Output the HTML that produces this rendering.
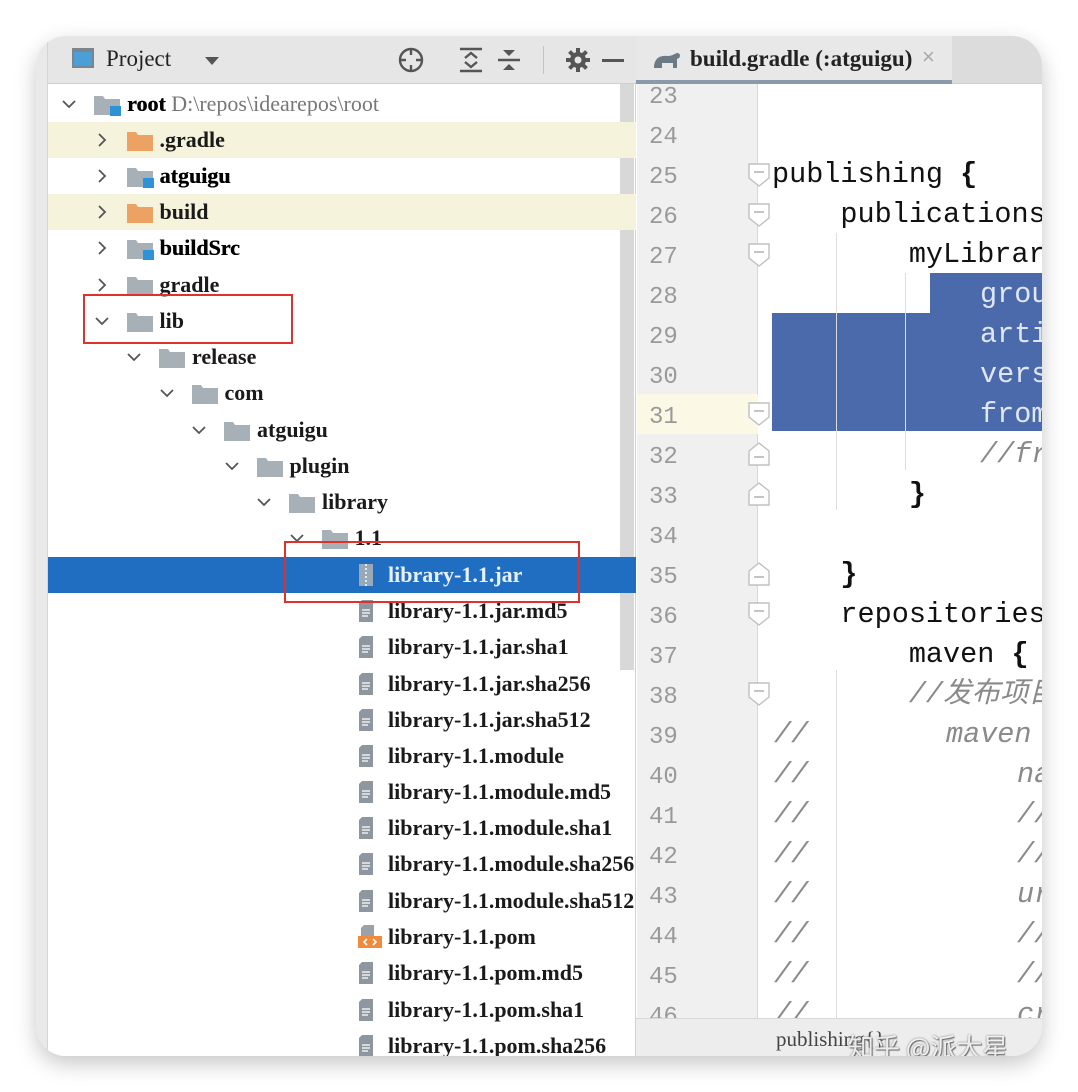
<!DOCTYPE html>
<html><head><meta charset="utf-8"><style>
*{margin:0;padding:0;box-sizing:border-box}
body{width:1078px;height:1092px;background:#fff;position:relative;overflow:hidden;font-family:"Liberation Serif","Noto Serif CJK SC",serif}
#frame{position:absolute;left:36px;top:36px;width:1006px;height:1020px;border-radius:30px;overflow:hidden;background:#fff;box-shadow:0 8px 22px rgba(0,0,0,.22)}
.abs{position:absolute}
#strip{left:0;top:0;width:12px;height:1020px;background:#e9e9e9;border-right:1px solid #d4d4d4}
#lhead{left:12px;top:0;width:588px;height:48px;background:#e6e6e6;border-bottom:1px solid #d0d0d0}
#tree{left:12px;top:48px;width:588px;height:972px;background:#fff;border-right:1px solid #d0d0d0}
.row{position:absolute;left:0;width:588px;height:36px;font-size:22px;line-height:36px;color:#1a1a1a;font-weight:bold;white-space:nowrap}
.row span{position:absolute;top:0}
.arr{position:absolute;top:9px;width:18px;height:18px}
.fold{position:absolute;top:8px}
.mod{color:#000;text-shadow:0.4px 0 0 #000}
.gray{color:#777;font-weight:normal}
#ehead{left:600px;top:0;width:406px;height:48px;background:#dcdcdc;border-bottom:1px solid #cfcfcf}
#tab{left:600px;top:0;width:316px;height:48px;background:#e8e8e8;border-bottom:4px solid #8a9aaa}
#gutter{left:601px;top:48px;width:121px;height:934px;background:#f0f0f0;border-right:1px solid #d6d6d6}
#code{left:722px;top:48px;width:284px;height:934px;background:#fff;overflow:hidden}
#folds{left:709px;top:48px;width:28px;height:934px}
#bbar{left:600px;top:982px;width:406px;height:38px;background:#ededed;border-top:1px solid #d8d8d8}
.ln{position:absolute;left:12px;font-family:"Liberation Mono",monospace;font-size:24px;color:#9a9a9a;line-height:40px;height:40px}
.cl{position:absolute;left:0;font-family:"Liberation Mono","Noto Sans CJK SC",monospace;font-size:28.5px;color:#111;line-height:40px;height:40px;white-space:pre}
.cm{color:#8a8a8a;font-style:italic}
.red{position:absolute;border:2px solid #e0322d}
</style></head><body>
<div id="frame">
<div class="abs" id="strip"></div>
<div class="abs" id="lhead">
 <div class="abs" style="left:24px;top:12px;width:22px;height:20px;border:2px solid #7a8590;background:#4a9fd6;border-top-width:4px"></div>
 <div class="abs" style="left:58px;top:10px;font-family:'Liberation Serif',serif;font-size:23px;color:#222">Project</div>
 <svg class="abs" style="left:156px;top:20px" width="16" height="10"><path d="M1 1 L15 1 L8 9 Z" fill="#555"/></svg>
 <svg class="abs" style="left:348px;top:10px" width="120" height="28">
  <circle cx="15" cy="14" r="11" fill="none" stroke="#555" stroke-width="2.4"/>
  <path d="M15 3v6M15 19v6M4 14h6M20 14h6" stroke="#555" stroke-width="2.4"/>
  <path d="M64 3h22M64 25h22M69 12l6-5 6 5M69 16l6 5 6-5" stroke="#555" stroke-width="2.4" fill="none"/>
 </svg>
 <svg class="abs" style="left:448px;top:10px" width="30" height="28"><path d="M2 14h22" stroke="#555" stroke-width="2.4"/><path d="M7 4l6 6 6-6Z M7 24l6-6 6 6Z" fill="#555"/></svg>
 <div class="abs" style="left:495px;top:10px;width:1px;height:28px;background:#c4c4c4"></div>
 <svg class="abs" style="left:518px;top:12px" width="24" height="24"><g fill="#555"><circle cx="12" cy="12" r="8"/><rect x="10" y="0" width="4" height="24"/><rect x="0" y="10" width="24" height="4"/><rect x="10" y="0" width="4" height="24" transform="rotate(45 12 12)"/><rect x="10" y="0" width="4" height="24" transform="rotate(-45 12 12)"/></g><circle cx="12" cy="12" r="3.5" fill="#e6e6e6"/></svg>
 <div class="abs" style="left:554px;top:23px;width:22px;height:3px;background:#555"></div>
</div>
<div class="abs" id="tree">
 <div class="abs" style="left:572px;top:0;width:14px;height:586px;background:#d8d8d8"></div>
 <div id="rows"></div>
</div>
<div class="abs" id="ehead"></div>
<div class="abs" id="tab">
 <svg class="abs" style="left:16px;top:14px" width="30" height="20"><path d="M2 18 C2 8 8 5 16 6 C20 6 22 4 25 3 C28 3 29 6 27 8 L25 9 L25 18 L21 18 L21 13 L10 13 L10 18 Z" fill="#6c7a86"/></svg>
 <div class="abs" style="left:54px;top:10px;font-size:23px;font-weight:bold;color:#222">build.gradle (:atguigu)</div>
 <div class="abs" style="left:286px;top:8px;font-family:'Liberation Sans',sans-serif;font-size:22px;color:#aaa">×</div>
</div>
<div class="abs" id="gutter"></div>
<div class="abs" id="code"></div>
<div class="abs" id="folds"></div>
<div class="abs" id="bbar"><div class="abs" style="left:140px;top:8px;font-size:21px;color:#444">publishing{}</div></div>
<div class="red" style="left:47px;top:258px;width:210px;height:50px"></div>
<div class="red" style="left:248px;top:505px;width:296px;height:62px"></div>
<div class="abs" style="left:812px;top:992px;font-family:'Noto Sans CJK SC',sans-serif;font-size:26px;color:rgba(255,255,255,.85);text-shadow:0 0 2px #777,1px 1px 1px #666">知乎 @派大星</div>
</div>
<script>
const F=(c,m)=>`<svg class="fold" width="28" height="22" style="left:LEFTpx"><path d="M1 2h9l2 3h15v16H1Z" fill="${c}"/>${m?'<rect x="17" y="12" width="11" height="10" fill="#2c93d6"/>':''}</svg>`;
const D=`<svg class="fold" width="16" height="24" style="left:LEFTpx;top:6px"><path d="M4 1h11v22H1V4Z" fill="#8e979f"/><path d="M4 11h8M4 14h8M4 17h6" stroke="#eee" stroke-width="1.5"/></svg>`;
const J=`<svg class="fold" width="16" height="24" style="left:LEFTpx;top:6px"><rect x="1" y="1" width="14" height="22" fill="#9aa9b8"/><path d="M8 1v22" stroke="#dfe8f0" stroke-width="2" stroke-dasharray="2 2"/></svg>`;
const P=`<svg class="fold" width="26" height="26" style="left:LEFTpx;top:5px"><path d="M6 1h10v14H3V4Z" fill="#9aa1a8"/><rect x="0" y="12" width="24" height="12" fill="#f08a3c"/><path d="M9 15l-3 3 3 3M15 15l3 3-3 3" stroke="#fff" stroke-width="1.6" fill="none"/></svg>`;
const G='#a7afb7',O='#eba263';
const R=[
[104,0,'d',F(G,1),'<b class="mod">root</b> <span class="gray" style="position:static">D:\\repos\\idearepos\\root</span>',0],
[140,1,'r',F(O),'.gradle',1],[176,1,'r',F(G,1),'<span class="mod" style="position:static">atguigu</span>',0],[212,1,'r',F(O),'build',1],
[248,1,'r',F(G,1),'<span class="mod" style="position:static">buildSrc</span>',0],[285,1,'r',F(G),'gradle',0],[321,1,'d',F(G),'lib',0],
[357,2,'d',F(G),'release'],[393,3,'d',F(G),'com'],[430,4,'d',F(G),'atguigu'],[466,5,'d',F(G),'plugin'],[502,6,'d',F(G),'library'],[538,7,'d',F(G),'1.1'],
[575,8,'',J,'library-1.1.jar',2],[611,8,'',D,'library-1.1.jar.md5'],[647,8,'',D,'library-1.1.jar.sha1'],[684,8,'',D,'library-1.1.jar.sha256'],
[720,8,'',D,'library-1.1.jar.sha512'],[756,8,'',D,'library-1.1.module'],[792,8,'',D,'library-1.1.module.md5'],[828,8,'',D,'library-1.1.module.sha1'],
[864,8,'',D,'library-1.1.module.sha256'],[901,8,'',D,'library-1.1.module.sha512'],[937,8,'',P,'library-1.1.pom'],[973,8,'',D,'library-1.1.pom.md5'],
[1010,8,'',D,'library-1.1.pom.sha1'],[1046,8,'',D,'library-1.1.pom.sha256']];
let h='';
for(const r of R){
 const top=r[0]-18-84, lv=r[1];
 const ax=24+32.5*lv-12, ix=ax+33, tx=ix+34;
 let bg=r[5]==1?'background:#f5f3dc;':r[5]==2?'background:#1f6ec2;color:#e8f0ff;':'';
 let a='';
 if(r[2]=='r')a=`<svg class="arr" style="left:${ax}px" viewBox="0 0 18 18"><path d="M6 3l6 6-6 6" stroke="#555" stroke-width="1.8" fill="none"/></svg>`;
 if(r[2]=='d')a=`<svg class="arr" style="left:${ax}px" viewBox="0 0 18 18"><path d="M3 6l6 6 6-6" stroke="#555" stroke-width="1.8" fill="none"/></svg>`;
 let icx = lv==8? 310 : ix;
 let ttx = lv==8? 340 : tx;
 h+=`<div class="row" style="top:${top}px;${bg}">${a}${r[3].replace('LEFT',icx)}<span style="left:${ttx}px">${r[4]}</span></div>`;
}
document.getElementById('rows').innerHTML=h;
let g='';
for(let i=23;i<=46;i++){g+=`<div class="ln" style="top:${(i-23)*40-6}px">${i}</div>`;}
document.getElementById('gutter').innerHTML='<div class="abs" style="left:0;top:'+(414-84-20)+'px;width:121px;height:40px;background:#fbf8e6"></div>'+g;
document.getElementById('folds').innerHTML='<svg width="28" height="934">'+
[[175,'d'],[215,'d'],[255,'d'],[414,'d'],[454,'u'],[494,'u'],[574,'u'],[614,'d'],[694,'d']].map(([y,t])=>{const c=y-84;return t=='d'?`<path d="M4 ${c-11}h20v14l-10 8l-10-8Z" fill="#fff" stroke="#c0c0c0" stroke-width="1.4"/><path d="M9 ${c-3}h10" stroke="#aaa" stroke-width="1.4"/>`:`<path d="M4 ${c+11}h20v-14l-10-8l-10 8Z" fill="#fff" stroke="#c0c0c0" stroke-width="1.4"/><path d="M9 ${c+3}h10" stroke="#aaa" stroke-width="1.4"/>`}).join('')+'</svg>';
const L={25:['publishing <b>{</b>',0],26:['    publications',0],27:['        myLibrary',0],28:['groupId',2],29:['artifactId',3],30:['version',3],31:['from',3],
32:['//from',4],33:['        <b>}</b>',0],35:['    <b>}</b>',0],36:['    repositories',0],37:['        maven <b>{</b>',0],38:['        //发布项目',1],
39:['//maven',5],40:['//name',6],41:['////',6],42:['////',6],43:['//url',6],44:['////',6],45:['////',6],46:['//cr',6]};
let c='<div class="abs" style="left:172px;top:'+(273-84)+'px;width:200px;height:40px;background:#4b6aab"></div><div class="abs" style="left:14px;top:'+(313-84)+'px;width:300px;height:118px;background:#4b6aab"></div>';
c+='<div class="abs" style="left:78px;top:'+(233-84)+'px;width:1px;height:'+(510-233)+'px;background:#ddd"></div><div class="abs" style="left:147px;top:'+(273-84)+'px;width:1px;height:'+(470-273)+'px;background:#ddd"></div>';
c+='<div class="abs" style="left:78px;top:'+(670-84)+'px;width:1px;height:400px;background:#ddd"></div>';
for(const k in L){const [t,s]=L[k];const top=(k-23)*40+76-84-20+19;
 if(s==2||s==3){c+=`<div class="cl" style="top:${top}px;left:222px;color:#dfe6f5">${t}</div>`;}
 else if(s==4){c+=`<div class="cl cm" style="top:${top}px;left:222px">${t}</div>`;}
 else if(s==5||s==6){c+=`<div class="cl cm" style="top:${top}px;left:16px">//</div><div class="cl cm" style="top:${top}px;left:${s==5?188:259}px">${t.slice(2)}</div>`;}
 else c+=`<div class="cl ${s==1?'cm':''}" style="top:${top}px;left:14px">${t}</div>`;}
document.getElementById('code').innerHTML=c;
</script>
</body></html>
